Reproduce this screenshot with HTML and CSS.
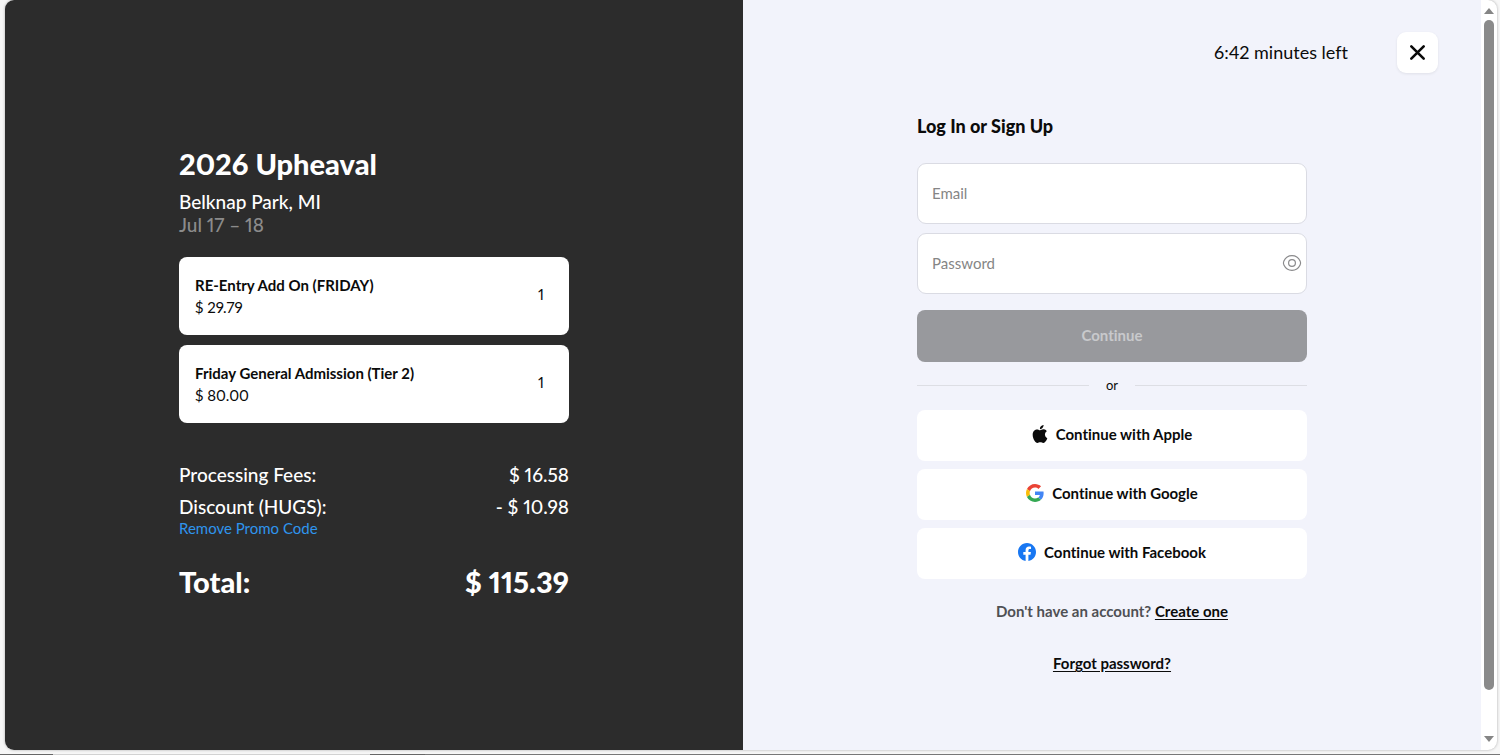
FILE: index.html
```html
<!DOCTYPE html>
<html lang="en">
    <head>
        <meta charset="UTF-8">
        <meta name="viewport" content="width=device-width, initial-scale=1.0">
        <title>2026 Upheaval - Checkout</title>
        <link rel="stylesheet" href="styles.css">
    </head>
    <body>
        <div class="window">
            <!-- order summary -->
            <section class="summary">
                <div class="summary-content">
                    <h1 class="event-title">2026 Upheaval</h1>
                    <p class="event-venue">Belknap Park, MI</p>
                    <p class="event-date">Jul 17 – 18</p>
                    <ul class="tickets">
                        <li class="ticket">
                            <div>
                                <div class="ticket-name">RE-Entry Add On (FRIDAY)</div>
                                <div class="ticket-price">$ 29.79</div>
                            </div>
                            <span class="ticket-count">1</span>
                        </li>
                        <li class="ticket">
                            <div>
                                <div class="ticket-name">Friday General Admission (Tier 2)</div>
                                <div class="ticket-price">$ 80.00</div>
                            </div>
                            <span class="ticket-count">1</span>
                        </li>
                    </ul>
                    <div class="fees">
                        <div class="row"><span>Processing Fees:</span><span>$ 16.58</span></div>
                        <div class="row"><span>Discount (HUGS):</span><span>- $ 10.98</span></div>
                    </div>
                    <button type="button" class="remove-promo">Remove Promo Code</button>
                    <div class="row total"><span>Total:</span><span>$ 115.39</span></div>
                </div>
            </section>

            <!-- login -->
            <main class="account">
                <header class="topbar">
                    <span class="timer">6:42 minutes left</span>
                    <button type="button" class="close" aria-label="Close">
                        <svg width="17" height="17" viewBox="0 0 17 17" fill="none" stroke="#0b0b0b" stroke-width="2.6" stroke-linecap="round">
                            <path d="M2.3 2.3l12.4 12.4M14.7 2.3L2.3 14.7"/>
                        </svg>
                    </button>
                </header>
                <form class="login">
                    <h2 class="login-title">Log In or Sign Up</h2>
                    <input class="field" type="email" placeholder="Email" aria-label="Email">
                    <div class="password">
                        <input class="field" type="password" placeholder="Password" aria-label="Password">
                        <button type="button" class="eye" aria-label="Show password">
                            <svg width="20" height="18" viewBox="0 0 20 18" fill="none" stroke="#8a8a8c" stroke-width="1.2">
                                <path d="M10 1.6c-3.7 0-6.6 2.2-8.1 5.3-.7 1.4-.7 2.8 0 4.2 1.5 3.1 4.4 5.3 8.1 5.3s6.6-2.2 8.1-5.3c.7-1.4.7-2.8 0-4.2C16.6 3.8 13.7 1.6 10 1.6z"/>
                                <circle cx="10" cy="9" r="3.4"/>
                            </svg>
                        </button>
                    </div>
                    <button type="submit" class="continue" disabled>Continue</button>
                    <div class="divider">or</div>
                    <div class="socials">
                        <button type="button" class="social">
                            <svg width="16" height="18" viewBox="0 0 814 1000" fill="#0b0b0b">
                                <path d="M788 341c-6 4-108 62-108 190 0 149 130 201 134 202-1 3-21 72-69 142-43 62-88 124-156 124s-86-40-164-40c-77 0-104 41-166 41s-106-57-156-127C45 790 0 663 0 541c0-194 126-297 251-297 66 0 121 43 162 43 40 0 101-46 177-46 28 0 130 3 198 100zM554 159c31-37 53-88 53-140 0-7-1-14-2-20-51 2-111 34-147 76-29 32-55 84-55 136 0 8 1 16 2 18 3 1 8 2 14 2 45 0 102-31 135-72z"/>
                            </svg>
                            Continue with Apple
                        </button>
                        <button type="button" class="social">
                            <svg width="18" height="18" viewBox="0 0 48 48">
                                <path fill="#EA4335" d="M24 9.5c3.54 0 6.71 1.22 9.21 3.6l6.85-6.85C35.9 2.38 30.47 0 24 0 14.62 0 6.51 5.38 2.56 13.22l7.98 6.19C12.43 13.72 17.74 9.5 24 9.5z"/>
                                <path fill="#4285F4" d="M46.98 24.55c0-1.57-.15-3.09-.38-4.55H24v9.02h12.94c-.58 2.96-2.26 5.48-4.78 7.18l7.73 6c4.51-4.18 7.09-10.36 7.09-17.65z"/>
                                <path fill="#FBBC05" d="M10.53 28.59c-.48-1.45-.76-2.99-.76-4.59s.27-3.14.76-4.59l-7.98-6.19C.92 16.46 0 20.12 0 24c0 3.88.92 7.54 2.56 10.78l7.97-6.19z"/>
                                <path fill="#34A853" d="M24 48c6.48 0 11.93-2.13 15.89-5.81l-7.73-6c-2.15 1.45-4.92 2.3-8.16 2.3-6.26 0-11.57-4.22-13.47-9.91l-7.98 6.19C6.51 42.62 14.62 48 24 48z"/>
                            </svg>
                            Continue with Google
                        </button>
                        <button type="button" class="social">
                            <svg width="18" height="18" viewBox="0 0 24 24">
                                <path fill="#1877F2" d="M24 12.07C24 5.4 18.63 0 12 0S0 5.4 0 12.07C0 18.1 4.39 23.09 10.13 24v-8.44H7.08v-3.49h3.05V9.41c0-3.02 1.79-4.69 4.53-4.69 1.31 0 2.69.24 2.69.24v2.97h-1.51c-1.49 0-1.96.93-1.96 1.89v2.25h3.33l-.53 3.49h-2.8V24C19.61 23.09 24 18.1 24 12.07z"/>
                            </svg>
                            Continue with Facebook
                        </button>
                    </div>
                    <p class="signup">Don't have an account? <a href="#">Create one</a></p>
                    <a class="forgot" href="#">Forgot password?</a>
                </form>
            </main>

            <div class="scrollbar" aria-hidden="true">
                <svg width="10" height="6" viewBox="0 0 10 6" fill="#858585"><path d="M5 0l5 6H0z"/></svg>
                <div class="thumb"></div>
                <svg width="10" height="6" viewBox="0 0 10 6" fill="#858585"><path d="M0 0h10L5 6z"/></svg>
            </div>
        </div>
        <div class="edge"></div>
    </body>
</html>
```
FILE: styles.css
```css
* {
    margin: 0;
    padding: 0;
    box-sizing: border-box;
}

body {
    display: flex;
    flex-direction: column;
    min-height: 100vh;
    background-color: #f7f7f7;
    color: #0b0b0b;
    font-family: Lato, "Liberation Sans", sans-serif;
    font-size: 15px;
    font-variant-ligatures: none;
    font-variant-numeric: proportional-nums;
    line-height: 20px;
}

button,
input {
    border: none;
    background: none;
    color: inherit;
    font: inherit;
    font-variant-ligatures: none;
}

button {
    cursor: pointer;
}

svg {
    flex-shrink: 0;
}

.window {
    display: flex;
    flex: 1;
    margin: 0 3px 4px 5px;
    border-radius: 9px;
    overflow: hidden;
    background-color: #fff;
    box-shadow: 0 0 3px rgba(0, 0, 0, 0.3);
}

/* order summary */
.summary {
    display: flex;
    flex: 1;
    align-items: center;
    justify-content: center;
    padding-bottom: 5px;
    background-color: #2c2c2c;
    color: #fff;
}

.summary-content {
    width: 100%;
    max-width: 390px;
}

.event-title {
    margin-bottom: 8px;
    font-size: 29px;
    font-weight: 900;
    line-height: 36px;
}

.event-venue,
.event-date,
.fees {
    font-size: 19px;
    font-weight: 500;
    line-height: 23px;
}

.event-date {
    color: #8b8b8b;
}

.tickets {
    display: flex;
    flex-direction: column;
    gap: 10px;
    margin: 21px 0 40px;
    list-style: none;
}

.ticket {
    display: flex;
    align-items: center;
    justify-content: space-between;
    padding: 17px 25px 17px 16px;
    border-radius: 8px;
    background-color: #fff;
    color: #0b0b0b;
    line-height: 22px;
}

.ticket-name {
    font-weight: 700;
}

.ticket-count {
    padding-bottom: 4px;
}

.fees {
    display: flex;
    flex-direction: column;
    gap: 9px;
}

.row {
    display: flex;
    justify-content: space-between;
}

.remove-promo {
    display: block;
    color: #2f95ee;
}

.total {
    margin-top: 26px;
    font-size: 29px;
    font-weight: 900;
    line-height: 36px;
}

/* login */
.account {
    flex: 1;
    background-color: #f2f3fb;
}

.topbar {
    display: flex;
    align-items: center;
    justify-content: flex-end;
    gap: 49px;
    padding: 32px 43px 0;
}

.timer {
    padding-bottom: 2px;
    font-size: 18px;
}

.close {
    display: flex;
    align-items: center;
    justify-content: center;
    width: 41px;
    height: 41px;
    border-radius: 9px;
    background-color: #fff;
    box-shadow: 0 1px 3px rgba(0, 0, 0, 0.08);
}

.login {
    display: flex;
    flex-direction: column;
    max-width: 390px;
    margin: 40px auto;
}

.login-title {
    margin-bottom: 24px;
    font-size: 18px;
    font-weight: 900;
    line-height: 26px;
}

.field {
    width: 100%;
    height: 61px;
    padding: 0 14px 2px;
    border: 1px solid #dadbe3;
    border-radius: 9px;
    background-color: #fff;
}

.field::placeholder {
    color: #858585;
}

.password {
    position: relative;
    margin: 9px 0 16px;
}

/* sits over the right end of the password box */
.eye {
    position: absolute;
    top: 0;
    right: 5px;
    bottom: 0;
    display: flex;
    align-items: center;
    padding-bottom: 1px;
}

.continue {
    height: 52px;
    padding-bottom: 2px;
    border-radius: 8px;
    background-color: #98999d;
    color: #c8c9cc;
    font-weight: 700;
}

.divider {
    display: flex;
    align-items: center;
    gap: 17px;
    margin: 13px 0 15px;
    font-size: 13px;
}

.divider::before,
.divider::after {
    content: "";
    flex: 1;
    height: 1px;
    background-color: #dddee4;
}

.socials {
    display: flex;
    flex-direction: column;
    gap: 8px;
}

.social {
    display: flex;
    align-items: center;
    justify-content: center;
    gap: 8px;
    height: 51px;
    padding-bottom: 3px;
    border-radius: 8px;
    background-color: #fff;
    font-weight: 700;
}

.signup,
.forgot {
    align-self: center;
    font-weight: 700;
}

.signup {
    margin: 22px 0 32px;
    color: #4f5054;
}

.signup a,
.forgot {
    color: #0b0b0b;
    text-underline-offset: 2px;
}

/* scroll track */
.scrollbar {
    display: flex;
    flex-direction: column;
    align-items: center;
    gap: 6px;
    width: 16px;
    padding: 8px 0;
}

.thumb {
    flex: 1;
    width: 10px;
    margin-bottom: 40px;
    border-radius: 5px;
    background-color: #8a8a8a;
}

.edge {
    height: 1px;
    background: linear-gradient(to right, #666 53px, #d2d2d2 53px 370px, #666 370px 425px, #777 425px);
}
```
